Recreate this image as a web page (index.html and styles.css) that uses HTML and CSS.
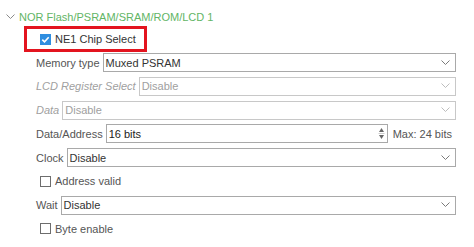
FILE: index.html
```html
<!DOCTYPE html>
<html>
<head>
<meta charset="utf-8">
<link rel="stylesheet" href="styles.css">
</head>
<body>
<div class="panel">
  <div class="tree-header">
    <svg class="tree-chevron" width="9" height="6" viewBox="0 0 9 6"><polyline points="0.5,0.5 4.5,4.5 8.5,0.5" fill="none" stroke="#8a8a8a" stroke-width="1"/></svg>
    <span class="tree-title">NOR Flash/PSRAM/SRAM/ROM/LCD 1</span>
  </div>
  <div class="highlight">
    <span class="check checked"><svg width="11" height="11" viewBox="0 0 11 11"><polyline points="2.3,5.6 4.5,7.8 8.7,3.2" fill="none" stroke="#fff" stroke-width="1.6"/></svg></span>
    <span class="check-label dark">NE1 Chip Select</span>
  </div>
  <div class="fields">
    <div class="row">
      <span class="label">Memory type</span>
      <div class="select"><span class="value">Muxed PSRAM</span><svg class="caret" width="9" height="6" viewBox="0 0 9 6"><polyline points="0.5,0.5 4.5,4.5 8.5,0.5" fill="none" stroke="#7a7a7a" stroke-width="1"/></svg></div>
    </div>
    <div class="row">
      <span class="label italic">LCD Register Select</span>
      <div class="select disabled"><span class="value">Disable</span><svg class="caret" width="9" height="6" viewBox="0 0 9 6"><polyline points="0.5,0.5 4.5,4.5 8.5,0.5" fill="none" stroke="#bdbdbd" stroke-width="1"/></svg></div>
    </div>
    <div class="row">
      <span class="label italic">Data</span>
      <div class="select disabled"><span class="value">Disable</span><svg class="caret" width="9" height="6" viewBox="0 0 9 6"><polyline points="0.5,0.5 4.5,4.5 8.5,0.5" fill="none" stroke="#bdbdbd" stroke-width="1"/></svg></div>
    </div>
    <div class="row">
      <span class="label">Data/Address</span>
      <div class="select spin"><span class="value strong">16 bits</span>
        <span class="spinner"><svg width="7" height="15" viewBox="0 0 7 15"><polygon points="1,6 3.5,2 6,6" fill="#666"/><line x1="0.5" y1="7.5" x2="6.5" y2="7.5" stroke="#ccc" stroke-width="1"/><polygon points="1,9 3.5,13 6,9" fill="#666"/></svg></span>
      </div>
      <span class="max">Max: 24 bits</span>
    </div>
    <div class="row">
      <span class="label">Clock</span>
      <div class="select"><span class="value">Disable</span><svg class="caret" width="9" height="6" viewBox="0 0 9 6"><polyline points="0.5,0.5 4.5,4.5 8.5,0.5" fill="none" stroke="#7a7a7a" stroke-width="1"/></svg></div>
    </div>
    <div class="row check-row">
      <span class="check"></span>
      <span class="check-label">Address valid</span>
    </div>
    <div class="row">
      <span class="label">Wait</span>
      <div class="select"><span class="value">Disable</span><svg class="caret" width="9" height="6" viewBox="0 0 9 6"><polyline points="0.5,0.5 4.5,4.5 8.5,0.5" fill="none" stroke="#7a7a7a" stroke-width="1"/></svg></div>
    </div>
    <div class="row check-row">
      <span class="check"></span>
      <span class="check-label">Byte enable</span>
    </div>
  </div>
</div>
</body>
</html>
```
FILE: styles.css
```css
html, body {
  margin: 0;
  padding: 0;
  background: #fff;
}
body {
  font-family: "Liberation Sans", Arial, sans-serif;
  font-size: 11px;
  color: #555;
}
.panel {
  width: 474px;
  height: 247px;
  overflow: hidden;
}
.tree-header {
  display: flex;
  align-items: center;
  height: 14px;
  padding-top: 10px;
  padding-left: 6px;
}
.tree-chevron {
  margin-right: 4px;
}
.tree-title {
  color: #62b565;
  font-size: 11px;
}
.highlight {
  display: flex;
  align-items: center;
  gap: 4px;
  width: fit-content;
  height: 20px;
  margin-top: 2px;
  margin-left: 24px;
  padding: 0 8px 0 13px;
  border: 3px solid #e3141f;
}
.check {
  display: inline-flex;
  align-items: center;
  justify-content: center;
  box-sizing: border-box;
  width: 11px;
  height: 11px;
  border: 1px solid #6d6d6d;
  background: #fff;
}
.check.checked {
  border: none;
  background: #2f8ee0;
}
.check-label {
  color: #555;
}
.check-label.dark {
  color: #333;
}
.fields {
  display: flex;
  flex-direction: column;
  gap: 4.75px;
  margin-top: 1px;
  padding-left: 36px;
  padding-right: 18px;
}
.row {
  display: flex;
  align-items: center;
  height: 19px;
}
.label {
  margin-right: 3px;
  white-space: nowrap;
  color: #555;
}
.label.italic {
  font-style: italic;
  color: #a0a0a0;
}
.select {
  flex: 1;
  display: flex;
  align-items: center;
  box-sizing: border-box;
  height: 19px;
  border: 1px solid #a9a9a9;
  background: #fff;
  padding: 0 5px 0 2px;
}
.select.disabled {
  border-color: #c8c8c8;
}
.value {
  flex: 1;
  color: #333;
}
.value.strong {
  color: #222;
}
.select.disabled .value {
  color: #a0a0a0;
}
.caret {
  flex: none;
}
.select.spin {
  padding-right: 2px;
}
.spinner {
  display: flex;
  align-items: center;
}
.max {
  margin-left: 5px;
  margin-right: 4px;
  color: #555;
}
.check-row {
  padding-left: 4px;
  gap: 4px;
}
```
